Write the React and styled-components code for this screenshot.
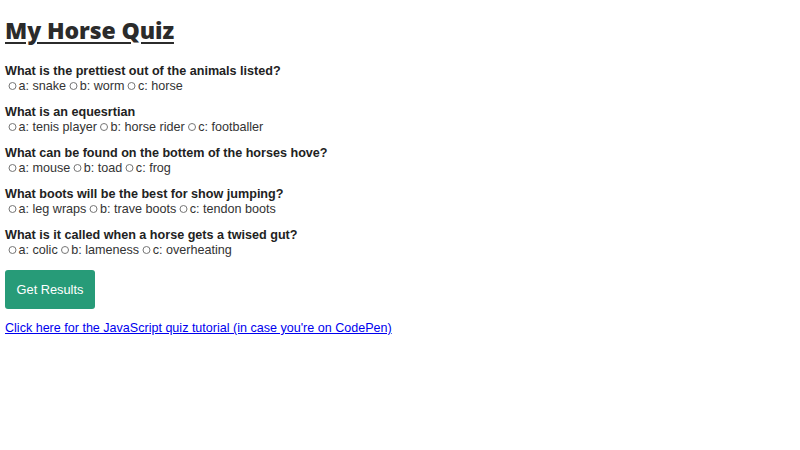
import React from 'react';
import styled, { createGlobalStyle } from 'styled-components';

const GlobalStyle = createGlobalStyle`
  html, body {
    margin: 0;
    padding: 0;
    background: #fff;
  }
  body {
    font-family: "Liberation Sans", Arial, sans-serif;
    color: #222;
  }
`;

const Page = styled.div`
  padding: 12px 5px 10px;
`;

const Title = styled.h1`
  margin: 0 0 16px;
  font-family: "Open Sans", "Noto Sans", sans-serif;
  font-size: 23px;
  font-weight: 800;
  letter-spacing: -0.1px;
  line-height: 36px;
  color: #2b2b2b;
  text-decoration: underline;
  text-decoration-thickness: 2px;
  text-underline-offset: 3px;
`;

const Quiz = styled.div`
  display: flex;
  flex-direction: column;
  gap: 12px;
`;

const Question = styled.div`
  font-size: 12.6px;
  font-weight: bold;
  line-height: 14.5px;
  color: #222;
`;

const Answers = styled.div`
  display: flex;
  align-items: center;
  font-size: 12.6px;
  line-height: 14.5px;
  color: #333;
`;

const Option = styled.label`
  display: inline-flex;
  align-items: center;
`;

const Radio = styled.input.attrs({ type: 'radio' })`
  width: 8.5px;
  height: 8.5px;
  margin: 0 2px 0 3px;
`;

const Block = styled.div``;

const Button = styled.button`
  margin-top: 13px;
  width: 90px;
  height: 39px;
  padding: 0;
  border: none;
  border-radius: 3px;
  background: #279b78;
  color: #fff;
  font-family: "Liberation Sans", Arial, sans-serif;
  font-size: 12.8px;
  cursor: pointer;
`;

const Link = styled.a`
  display: inline-block;
  margin-top: 12px;
  font-size: 12.55px;
  color: #0000ee;
  text-decoration: underline;
`;

const questions = [
  {
    q: 'What is the prettiest out of the animals listed?',
    a: ['snake', 'worm', 'horse'],
  },
  {
    q: 'What is an equesrtian',
    a: ['tenis player', 'horse rider', 'footballer'],
  },
  {
    q: 'What can be found on the bottem of the horses hove?',
    a: ['mouse', 'toad', 'frog'],
  },
  {
    q: 'What boots will be the best for show jumping?',
    a: ['leg wraps', 'trave boots', 'tendon boots'],
  },
  {
    q: 'What is it called when a horse gets a twised gut?',
    a: ['colic', 'lameness', 'overheating'],
  },
];

const letters = ['a', 'b', 'c'];

export default function App() {
  return (
    <>
      <GlobalStyle />
      <Page>
        <Title>My Horse Quiz</Title>
        <Quiz>
          {questions.map((item, i) => (
            <Block key={i}>
              <Question>{item.q}</Question>
              <Answers>
                {item.a.map((ans, j) => (
                  <Option key={j}>
                    <Radio name={`q${i}`} />
                    {letters[j]}: {ans}
                  </Option>
                ))}
              </Answers>
            </Block>
          ))}
        </Quiz>
        <Button>Get Results</Button>
        <div>
          <Link href="#">Click here for the JavaScript quiz tutorial (in case you're on CodePen)</Link>
        </div>
      </Page>
    </>
  );
}
